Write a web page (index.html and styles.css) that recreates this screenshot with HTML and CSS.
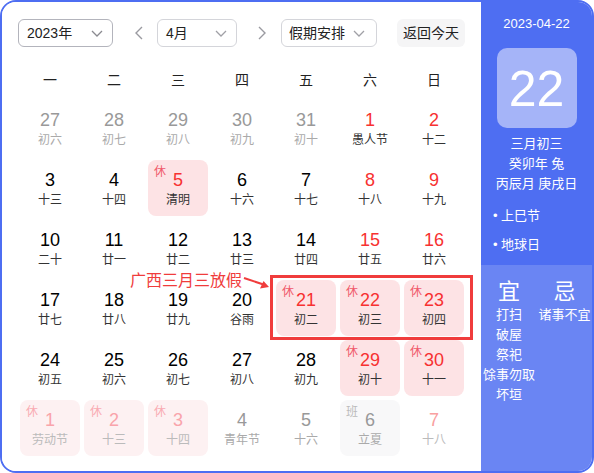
FILE: index.html
```html
<!DOCTYPE html>
<html lang="zh">
<head>
<meta charset="utf-8">
<link rel="stylesheet" href="styles.css">
</head>
<body>
<div class="app">
  <div class="left">
    <div class="header">
      <div class="select year"><span>2023年</span><svg class="chev" width="12" height="7" viewBox="0 0 12 7"><path d="M1 1l5 5 5-5" fill="none" stroke="#8a8a90" stroke-width="1.3"/></svg></div>
      <div class="nav"><svg width="9" height="14" viewBox="0 0 9 14"><path d="M8 1L2 7l6 6" fill="none" stroke="#9a9aa0" stroke-width="1.4"/></svg></div>
      <div class="select month"><span>4月</span><svg class="chev" width="12" height="7" viewBox="0 0 12 7"><path d="M1 1l5 5 5-5" fill="none" stroke="#a0a0a6" stroke-width="1.3"/></svg></div>
      <div class="nav"><svg width="9" height="14" viewBox="0 0 9 14"><path d="M1 1l6 6-6 6" fill="none" stroke="#9a9aa0" stroke-width="1.4"/></svg></div>
      <div class="select holiday"><span>假期安排</span><svg class="chev" width="12" height="7" viewBox="0 0 12 7"><path d="M1 1l5 5 5-5" fill="none" stroke="#a0a0a6" stroke-width="1.3"/></svg></div>
      <div class="today-btn">返回今天</div>
    </div>
    <div class="weekdays">
      <div>一</div><div>二</div><div>三</div><div>四</div><div>五</div><div>六</div><div>日</div>
    </div>
    <div class="grid">
      <div class="cell other"><div class="num">27</div><div class="lunar">初六</div></div>
      <div class="cell other"><div class="num">28</div><div class="lunar">初七</div></div>
      <div class="cell other"><div class="num">29</div><div class="lunar">初八</div></div>
      <div class="cell other"><div class="num">30</div><div class="lunar">初九</div></div>
      <div class="cell other"><div class="num">31</div><div class="lunar">初十</div></div>
      <div class="cell wk"><div class="num">1</div><div class="lunar">愚人节</div></div>
      <div class="cell wk"><div class="num">2</div><div class="lunar">十二</div></div>

      <div class="cell"><div class="num">3</div><div class="lunar">十三</div></div>
      <div class="cell"><div class="num">4</div><div class="lunar">十四</div></div>
      <div class="cell rest"><span class="tag">休</span><div class="num">5</div><div class="lunar">清明</div></div>
      <div class="cell"><div class="num">6</div><div class="lunar">十六</div></div>
      <div class="cell"><div class="num">7</div><div class="lunar">十七</div></div>
      <div class="cell wk"><div class="num">8</div><div class="lunar">十八</div></div>
      <div class="cell wk"><div class="num">9</div><div class="lunar">十九</div></div>

      <div class="cell"><div class="num">10</div><div class="lunar">二十</div></div>
      <div class="cell"><div class="num">11</div><div class="lunar">廿一</div></div>
      <div class="cell"><div class="num">12</div><div class="lunar">廿二</div></div>
      <div class="cell"><div class="num">13</div><div class="lunar">廿三</div></div>
      <div class="cell"><div class="num">14</div><div class="lunar">廿四</div></div>
      <div class="cell wk"><div class="num">15</div><div class="lunar">廿五</div></div>
      <div class="cell wk"><div class="num">16</div><div class="lunar">廿六</div></div>

      <div class="cell"><div class="num">17</div><div class="lunar">廿七</div></div>
      <div class="cell"><div class="num">18</div><div class="lunar">廿八</div></div>
      <div class="cell"><div class="num">19</div><div class="lunar">廿九</div></div>
      <div class="cell"><div class="num">20</div><div class="lunar">谷雨</div></div>
      <div class="cell rest"><span class="tag">休</span><div class="num">21</div><div class="lunar">初二</div></div>
      <div class="cell rest"><span class="tag">休</span><div class="num">22</div><div class="lunar">初三</div></div>
      <div class="cell rest"><span class="tag">休</span><div class="num">23</div><div class="lunar">初四</div></div>

      <div class="cell"><div class="num">24</div><div class="lunar">初五</div></div>
      <div class="cell"><div class="num">25</div><div class="lunar">初六</div></div>
      <div class="cell"><div class="num">26</div><div class="lunar">初七</div></div>
      <div class="cell"><div class="num">27</div><div class="lunar">初八</div></div>
      <div class="cell"><div class="num">28</div><div class="lunar">初九</div></div>
      <div class="cell rest"><span class="tag">休</span><div class="num">29</div><div class="lunar">初十</div></div>
      <div class="cell rest"><span class="tag">休</span><div class="num">30</div><div class="lunar">十一</div></div>

      <div class="cell rest faded"><span class="tag">休</span><div class="num">1</div><div class="lunar">劳动节</div></div>
      <div class="cell rest faded"><span class="tag">休</span><div class="num">2</div><div class="lunar">十三</div></div>
      <div class="cell rest faded"><span class="tag">休</span><div class="num">3</div><div class="lunar">十四</div></div>
      <div class="cell other"><div class="num">4</div><div class="lunar">青年节</div></div>
      <div class="cell other"><div class="num">5</div><div class="lunar">十六</div></div>
      <div class="cell other work"><span class="tag">班</span><div class="num">6</div><div class="lunar">立夏</div></div>
      <div class="cell other wkfaded"><div class="num">7</div><div class="lunar">十八</div></div>
    </div>
    <div class="note">广西三月三放假</div>
    <svg class="arrow" width="30" height="16" viewBox="0 0 30 16"><path d="M1 3L22 10" stroke="#f03c3c" stroke-width="2" fill="none"/><path d="M26 12L17 13.5L20.5 6Z" fill="#f03c3c"/></svg>
    <div class="mark"></div>
  </div>
  <div class="right">
    <div class="info">
      <div class="date">2023-04-22</div>
      <div class="bigday">22</div>
      <div class="lines">
        <div>三月初三</div>
        <div>癸卯年 兔</div>
        <div>丙辰月 庚戌日</div>
      </div>
      <ul class="fests">
        <li>上巳节</li>
        <li>地球日</li>
      </ul>
    </div>
    <div class="yiji">
      <div class="col">
        <div class="head">宜</div>
        <div class="item">打扫</div>
        <div class="item">破屋</div>
        <div class="item">祭祀</div>
        <div class="item">馀事勿取</div>
        <div class="item">坏垣</div>
      </div>
      <div class="col">
        <div class="head">忌</div>
        <div class="item">诸事不宜</div>
      </div>
    </div>
  </div>
</div>
</body>
</html>
```
FILE: styles.css
```css
* { box-sizing: border-box; }
html, body { margin: 0; padding: 0; background: #fff; }
body {
  font-family: "Liberation Sans", "Noto Sans CJK SC", sans-serif;
  color: #333;
}
.app {
  width: 594px;
  height: 473px;
  display: flex;
  border: 2px solid #4e6ef2;
  border-radius: 16px;
  overflow: hidden;
}
.left {
  position: relative;
  width: 479px;
  padding: 17px 0 0 18px;
  background: #fff;
}
.header {
  display: flex;
  align-items: center;
  height: 28px;
  margin-left: -2px;
}
.select {
  height: 28px;
  border: 1px solid #d4d5da;
  border-radius: 6px;
  display: flex;
  align-items: center;
  justify-content: space-between;
  padding: 0 9px 0 8px;
  font-size: 14px;
  color: #222;
}
.select span { line-height: 26px; }
.select.year { width: 95px; border-color: #b3b4bc; }
.select.month { width: 80px; }
.select.holiday { width: 96px; padding-left: 7px; padding-right: 11px; }
.nav {
  width: 44px;
  height: 28px;
  display: flex;
  align-items: center;
  justify-content: center;
  padding-left: 6px;
}
.today-btn {
  margin-left: 20px;
  width: 68px;
  height: 28px;
  line-height: 28px;
  text-align: center;
  background: #f5f5f6;
  border-radius: 6px;
  font-size: 14px;
  color: #222;
}
.weekdays {
  display: grid;
  grid-template-columns: repeat(7, 60px);
  column-gap: 4px;
  margin-top: 19px;
  height: 28px;
  line-height: 28px;
  text-align: center;
  font-size: 14px;
  color: #222;
}
.grid {
  margin-top: 6px;
  display: grid;
  grid-template-columns: repeat(7, 60px);
  grid-auto-rows: 56px;
  gap: 4px;
}
.cell {
  position: relative;
  border-radius: 8px;
  text-align: center;
}
.num {
  padding-top: 9px;
  line-height: 22px;
  font-size: 18px;
  color: #000;
}
.lunar {
  margin-top: 1px;
  line-height: 17px;
  font-size: 12px;
  color: #333;
}
.tag {
  position: absolute;
  left: 6px;
  top: 4px;
  font-size: 12px;
  line-height: 16px;
  color: #f0596a;
}
.cell.other .num { color: #999; }
.cell.other .lunar { color: #aaa; }
.cell.wk .num { color: #f73131; }
.cell.rest { background: #fde3e5; }
.cell.rest .num { color: #f73131; }
.cell.rest.faded { background: #fdf1f2; }
.cell.rest.faded .num { color: #f9a4ab; }
.cell.rest.faded .lunar { color: #bbb; }
.cell.rest.faded .tag { color: #f9abb2; }
.cell.work { background: #f8f8f9; }
.cell.work .tag { color: #bbb; }
.cell.wkfaded .num { color: #f9a0a0; }
.cell.wkfaded .lunar { color: #bbb; }

.note {
  position: absolute;
  left: 128px;
  top: 269px;
  font-size: 16px;
  line-height: 16px;
  color: #f03c3c;
  font-family: "Noto Sans CJK SC", sans-serif;
}
.arrow {
  position: absolute;
  left: 241px;
  top: 273px;
}
.mark {
  position: absolute;
  left: 268px;
  top: 273px;
  width: 203px;
  height: 65px;
  border: 3px solid #f03c3c;
}

.right {
  width: 111px;
  display: flex;
  flex-direction: column;
  color: #fff;
}
.info {
  height: 263px;
  background: #4e6ef2;
  padding-top: 12px;
}
.date {
  text-align: center;
  font-size: 13px;
  line-height: 20px;
}
.bigday {
  width: 80px;
  height: 80px;
  margin: 14px auto 0;
  background: #a5b4f8;
  border-radius: 10px;
  text-align: center;
  font-size: 50px;
  line-height: 82px;
  color: #fff;
}
.lines {
  margin-top: 6px;
  text-align: center;
  font-size: 13px;
  line-height: 20px;
}
.fests {
  list-style: none;
  margin: 7px 0 0;
  padding: 0 0 0 14px;
  font-size: 13px;
  line-height: 29px;
}
.fests li::before {
  content: "•";
  display: inline-block;
  width: 8px;
  margin-left: -2px;
}
.yiji {
  flex: 1;
  background: #6a85f3;
  display: grid;
  grid-template-columns: 56px 55px;
  padding-top: 14px;
}
.col { text-align: center; }
.head {
  font-size: 22px;
  line-height: 26px;
}
.item {
  font-size: 13px;
  line-height: 20px;
  white-space: nowrap;
}
```
